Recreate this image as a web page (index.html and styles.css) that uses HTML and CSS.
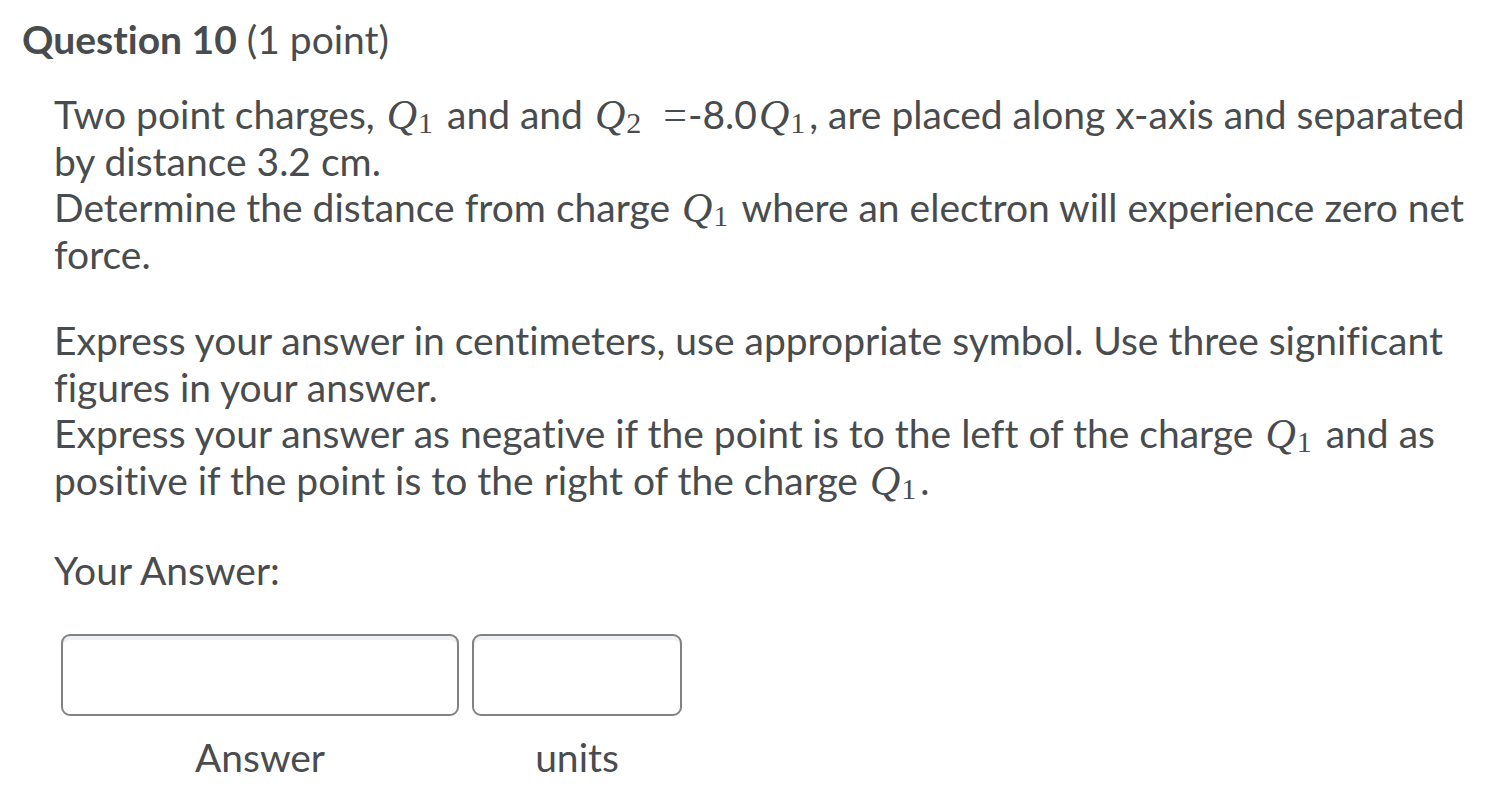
FILE: index.html
```html
<!DOCTYPE html>
<html>
<head>
<meta charset="utf-8">
<link rel="stylesheet" href="styles.css">
</head>
<body>
<div class="page">
  <h1 class="title"><strong>Question 10</strong> <span class="pts">(1 point)</span></h1>
  <div class="question">
    <p class="para">Two point charges, <span class="m"><i>Q</i><sub>1</sub></span> and and <span class="m"><i>Q</i><sub>2</sub></span> <span class="m eq">=</span>-8.0<span class="m"><i>Q</i><sub>1</sub></span>, are placed along x-axis and separated by distance 3.2 cm.<br>Determine the distance from charge <span class="m"><i>Q</i><sub>1</sub></span> where an electron will experience zero net force.</p>
    <p class="para gap">Express your answer in centimeters, use appropriate symbol. Use three significant figures in your answer.<br>Express your answer as negative if the point is to the left of the charge <span class="m"><i>Q</i><sub>1</sub></span> and as positive if the point is to the right of the charge <span class="m"><i>Q</i><sub>1</sub></span>.</p>
    <p class="para gap2">Your Answer:</p>
    <div class="answers">
      <div class="field wide">
        <div class="box"></div>
        <div class="label">Answer</div>
      </div>
      <div class="field narrow">
        <div class="box"></div>
        <div class="label">units</div>
      </div>
    </div>
  </div>
</div>
</body>
</html>
```

FILE: styles.css
```css
html, body {
  margin: 0;
  padding: 0;
  background: #ffffff;
}
body {
  font-family: Lato, "Open Sans", sans-serif;
  color: #494c4e;
  font-variant-ligatures: none;
}
.page {
  padding: 15px 18px 0 22px;
}
.title {
  margin: 0;
  font-size: 39px;
  line-height: 48px;
  font-weight: 400;
}
.title strong {
  font-weight: 700;
}
.question {
  padding-left: 32px;
  padding-top: 28px;
}
.para {
  margin: 0;
  font-size: 39px;
  line-height: 46.5px;
}
.para.gap {
  margin-top: 40px;
}
.para.gap2 {
  margin-top: 44px;
}
.m {
  font-family: "Liberation Serif", "Times New Roman", serif;
  font-size: 42px;
  line-height: 0;
  margin-left: 2px;
  margin-right: 4px;
}
.m i {
  font-style: italic;
}
.m sub {
  font-size: 30px;
  vertical-align: -4px;
  line-height: 0;
  margin-left: 1px;
}
.m.eq {
  margin-left: 8px;
  margin-right: 1px;
}
.answers {
  display: flex;
  gap: 13px;
  margin-top: 40px;
  padding-left: 7px;
}
.field {
  display: flex;
  flex-direction: column;
  align-items: center;
}
.box {
  box-sizing: border-box;
  height: 82px;
  border: 2px solid #808284;
  border-radius: 9px;
  box-shadow: inset 0 4px 0 #eef0f3;
  background: #fff;
  align-self: stretch;
}
.wide { width: 398px; }
.narrow { width: 210px; }
.label {
  margin-top: 18px;
  font-size: 39px;
  line-height: 46.5px;
}
```
